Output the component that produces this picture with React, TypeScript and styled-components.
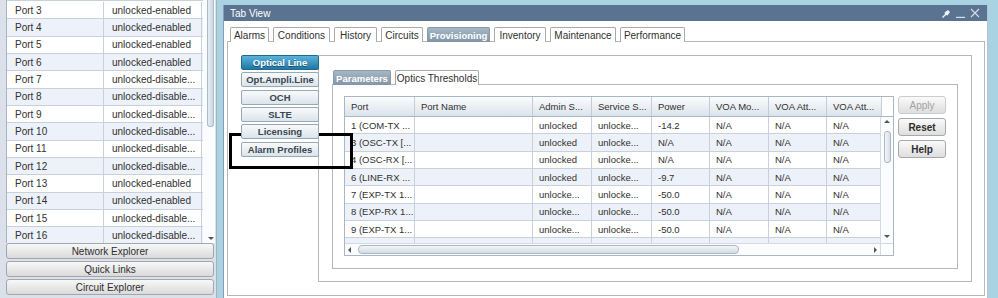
import * as React from 'react';
import styled, { createGlobalStyle, css } from 'styled-components';

const FONT = `"Liberation Sans", Arial, sans-serif`;
const ROW_H = 17.33;
const GRID = '#c8d1db';
const TINT = '#edf2fa';
const PANEL_BORDER = '#b4b8bc';

const GlobalStyle = createGlobalStyle`
  html, body { margin: 0; padding: 0; }
  body { font-family: ${FONT}; background: #a9d3e3; }
  * { box-sizing: border-box; }
`;

const Screen = styled.div`
  position: relative;
  width: 998px;
  height: 298px;
  display: flex;
  overflow: hidden;
  background: #a9d3e3;
  font-family: ${FONT};
  font-size: 10px;
  color: #303030;
`;

/* ---------- left panel ---------- */

const LeftPanel = styled.div`
  width: 217px;
  flex: none;
  display: flex;
  flex-direction: column;
  padding: 0 1px 0 6px;
  background: #dbe1ea;
  border-right: 1px solid #a3b1be;
`;

const PortGrid = styled.div`
  height: 243px;
  display: flex;
  background: #fff;
  border-left: 1px solid #a9b4c0;
`;

const PortRows = styled.div`
  flex: 1;
  overflow: hidden;
  padding-top: 1px;
  border-top: 1px solid ${GRID};
`;

const PortRow = styled.div<{ $tint: boolean }>`
  display: grid;
  grid-template-columns: 97px 98px;
  height: ${ROW_H}px;
  background: ${(p) => (p.$tint ? TINT : '#fff')};
  border-bottom: 1px solid ${GRID};
`;

const PortCell = styled.div`
  display: flex;
  align-items: center;
  padding-left: 8px;
  border-right: 1px solid ${GRID};
  white-space: nowrap;
  overflow: hidden;
`;

const SideScroll = styled.div`
  width: 12px;
  flex: none;
  display: flex;
  flex-direction: column;
  justify-content: space-between;
  align-items: flex-end;
  padding: 0 1px 3px 0;
  background: #fbfcfd;
`;

const SideThumb = styled.div`
  width: 7px;
  height: 127px;
  border: 1px solid #a8bccb;
  border-top: none;
  border-radius: 0 0 3px 3px;
  background: linear-gradient(90deg, #e6eef4, #c9d8e3);
`;

const Arrow = styled.span<{ $dir: 'up' | 'down' | 'left' | 'right' }>`
  width: 0;
  height: 0;
  display: block;
  flex: none;
  ${(p) =>
    p.$dir === 'down'
      ? css`border-left: 3px solid transparent; border-right: 3px solid transparent; border-top: 3px solid #555;`
      : p.$dir === 'up'
      ? css`border-left: 3px solid transparent; border-right: 3px solid transparent; border-bottom: 3px solid #555;`
      : p.$dir === 'left'
      ? css`border-top: 3px solid transparent; border-bottom: 3px solid transparent; border-right: 3px solid #555;`
      : css`border-top: 3px solid transparent; border-bottom: 3px solid transparent; border-left: 3px solid #555;`}
`;

const ExplorerStack = styled.div`
  display: flex;
  flex-direction: column;
  gap: 2px;
  padding-right: 1px;
`;

const ExplorerButton = styled.div`
  height: 16px;
  display: flex;
  align-items: center;
  justify-content: center;
  border: 1px solid #a2a7ac;
  border-radius: 3px;
  background: linear-gradient(#f8f8f8, #dadada);
  color: #2e2e2e;
`;

/* ---------- window ---------- */

const Window = styled.div`
  width: 765px;
  flex: none;
  margin: 5px 0 0 6px;
  display: flex;
  flex-direction: column;
  border-left: 1px solid #8a9cad;
  border-right: 1px solid #b6c4cf;
`;

const TitleBar = styled.div`
  height: 16px;
  flex: none;
  display: flex;
  align-items: center;
  justify-content: space-between;
  padding: 0 7px 0 6px;
  background: #5a7390;
  color: #fff;
`;

const TitleIcons = styled.div`
  display: flex;
  align-items: center;
  gap: 4px;
`;

const WindowBody = styled.div`
  flex: 1;
  display: flex;
  flex-direction: column;
  padding: 5px 2px 2px 3px;
  background: #fff;
`;

const TabStrip = styled.div`
  display: flex;
  align-items: flex-end;
  gap: 4px;
  height: 16px;
  padding-left: 3px;
  margin-bottom: -1px;
  position: relative;
`;

const Tab = styled.div<{ $active?: boolean; $w: number }>`
  width: ${(p) => p.$w}px;
  height: 15px;
  display: flex;
  align-items: center;
  justify-content: center;
  border: 1px solid #a9a9a9;
  border-bottom: none;
  border-radius: 2px 2px 0 0;
  white-space: nowrap;
  ${(p) =>
    p.$active
      ? css`
          background: linear-gradient(#a5b6c4, #8295a7);
          color: #fff;
          font-weight: bold;
          font-size: 9.5px;
          border-color: #8a9aa8;
        `
      : css`
          background: #fff;
          color: #303030;
        `}
`;

const TabPanel = styled.div`
  flex: 1;
  display: flex;
  border: 1px solid ${PANEL_BORDER};
  padding: 13px 12px 13px 13px;
`;

const SideNav = styled.div`
  width: 78px;
  flex: none;
  display: flex;
  flex-direction: column;
  gap: 2.33px;
  margin-right: -1px;
  position: relative;
  z-index: 1;
`;

const SideButton = styled.div<{ $active?: boolean }>`
  height: 15px;
  display: flex;
  align-items: center;
  justify-content: center;
  border: 1px solid #98a8b6;
  border-radius: 2px;
  font-weight: bold;
  font-size: 9.5px;
  white-space: nowrap;
  ${(p) =>
    p.$active
      ? css`
          background: linear-gradient(#5bb3da, #1f77a4);
          border-color: #206a8e;
          color: #fff;
          text-shadow: 0 1px 0 #174f6c;
        `
      : css`
          background: linear-gradient(#f8fafc, #dbe4eb);
          color: #3a4650;
        `}
`;

const InnerPanel = styled.div`
  flex: 1;
  display: flex;
  flex-direction: column;
  border: 1px solid ${PANEL_BORDER};
  padding: 14px 13px 12px 13px;
`;

const SubTabs = styled(TabStrip)`
  padding-left: 1px;
  height: 15px;
`;

const ParamsPanel = styled.div`
  flex: 1;
  display: flex;
  gap: 4px;
  border: 1px solid ${PANEL_BORDER};
  padding: 11px 10px 10px 11px;
`;

const COLS = '70px 118px 59px 60px 58px 59px 58px 55px';

const DataTable = styled.div`
  width: 550px;
  height: 160px;
  flex: none;
  display: flex;
  flex-direction: column;
  border: 1px solid #a9b6c3;
  font-size: 9.5px;
`;

const HeaderRow = styled.div`
  height: 20px;
  flex: none;
  display: grid;
  grid-template-columns: ${COLS} 1fr;
  border-bottom: 1px solid #aab6c2;
`;

const HeaderCell = styled.div<{ $blank?: boolean }>`
  display: flex;
  align-items: center;
  padding-left: 6px;
  border-right: 1px solid ${(p) => (p.$blank ? 'transparent' : '#c2ccd6')};
  background: ${(p) => (p.$blank ? '#fff' : 'linear-gradient(#fbfcfd, #dbe3eb)')};
  white-space: nowrap;
`;

const TableBody = styled.div`
  flex: 1;
  display: flex;
  overflow: hidden;
`;

const DataRows = styled.div`
  flex: 1;
  overflow: hidden;
`;

const DataRow = styled.div<{ $tint: boolean }>`
  height: ${ROW_H}px;
  display: grid;
  grid-template-columns: ${COLS};
  background: ${(p) => (p.$tint ? TINT : '#fff')};
  border-bottom: 1px solid ${GRID};
`;

const DataCell = styled.div`
  display: flex;
  align-items: center;
  padding-left: 6px;
  border-right: 1px solid ${GRID};
  white-space: nowrap;
  overflow: hidden;
`;

const VScroll = styled.div`
  width: 13px;
  flex: none;
  display: flex;
  flex-direction: column;
  align-items: center;
  padding: 3px 0 5px;
  border-left: 1px solid #d3dae1;
  background: #fbfcfd;
`;

const VThumb = styled.div`
  width: 7px;
  height: 32px;
  margin-top: 8px;
  border: 1px solid #a9b8c4;
  border-radius: 3px;
  background: linear-gradient(90deg, #f3f6f8, #d6dfe6);
`;

const Spacer = styled.div`
  flex: 1;
`;

const HScroll = styled.div`
  height: 12px;
  flex: none;
  display: flex;
  align-items: center;
  border-top: 1px solid #d3dae1;
  background: #fbfcfd;
  padding-left: 3px;
`;

const HThumb = styled.div`
  width: 381px;
  height: 9px;
  margin-left: 7px;
  border: 1px solid #a9b8c4;
  border-radius: 4px;
  background: linear-gradient(#f3f6f8, #d3dce4);
`;

const Corner = styled.div`
  width: 13px;
  height: 100%;
  margin-left: 3px;
  border-left: 1px solid #d3dae1;
  background: #fff;
`;

const ActionStack = styled.div`
  display: flex;
  flex-direction: column;
  gap: 4px;
`;

const ActionButton = styled.div<{ $disabled?: boolean }>`
  width: 48px;
  height: 18px;
  display: flex;
  align-items: center;
  justify-content: center;
  border: 1px solid ${(p) => (p.$disabled ? '#c9cdd1' : '#a3a8ad')};
  border-radius: 3px;
  background: linear-gradient(#fafafa, #dedede);
  font-weight: ${(p) => (p.$disabled ? 'normal' : 'bold')};
  color: ${(p) => (p.$disabled ? '#a3a3a3' : '#2e2e2e')};
`;

const Highlight = styled.div`
  position: absolute;
  left: 229px;
  top: 133px;
  width: 124px;
  height: 36px;
  border: 3px solid #000;
  pointer-events: none;
`;

/* ---------- data ---------- */

const ports: [string, string][] = [
  ['Port 3', 'unlocked-enabled'],
  ['Port 4', 'unlocked-enabled'],
  ['Port 5', 'unlocked-enabled'],
  ['Port 6', 'unlocked-enabled'],
  ['Port 7', 'unlocked-disable...'],
  ['Port 8', 'unlocked-disable...'],
  ['Port 9', 'unlocked-disable...'],
  ['Port 10', 'unlocked-disable...'],
  ['Port 11', 'unlocked-disable...'],
  ['Port 12', 'unlocked-disable...'],
  ['Port 13', 'unlocked-enabled'],
  ['Port 14', 'unlocked-enabled'],
  ['Port 15', 'unlocked-disable...'],
  ['Port 16', 'unlocked-disable...'],
];

const tabs = [
  { label: 'Alarms', w: 39 },
  { label: 'Conditions', w: 57 },
  { label: 'History', w: 43 },
  { label: 'Circuits', w: 42 },
  { label: 'Provisioning', w: 63, active: true },
  { label: 'Inventory', w: 52 },
  { label: 'Maintenance', w: 66 },
  { label: 'Performance', w: 65 },
];

const sideItems = ['Optical Line', 'Opt.Ampli.Line', 'OCH', 'SLTE', 'Licensing', 'Alarm Profiles'];

const headers = ['Port', 'Port Name', 'Admin S...', 'Service S...', 'Power', 'VOA Mo...', 'VOA Att...', 'VOA Att...'];

const rows: string[][] = [
  ['1 (COM-TX ...', '', 'unlocked', 'unlocke...', '-14.2', 'N/A', 'N/A', 'N/A'],
  ['3 (OSC-TX [...', '', 'unlocked', 'unlocke...', 'N/A', 'N/A', 'N/A', 'N/A'],
  ['4 (OSC-RX [...', '', 'unlocked', 'unlocke...', 'N/A', 'N/A', 'N/A', 'N/A'],
  ['6 (LINE-RX ...', '', 'unlocked', 'unlocke...', '-9.7', 'N/A', 'N/A', 'N/A'],
  ['7 (EXP-TX 1...', '', 'unlocke...', 'unlocke...', '-50.0', 'N/A', 'N/A', 'N/A'],
  ['8 (EXP-RX 1...', '', 'unlocke...', 'unlocke...', '-50.0', 'N/A', 'N/A', 'N/A'],
  ['9 (EXP-TX 1...', '', 'unlocke...', 'unlocke...', '-50.0', 'N/A', 'N/A', 'N/A'],
  ['10 (EXP-RX ...', '', 'unlocke...', 'unlocke...', '-50.0', 'N/A', 'N/A', 'N/A'],
];

const TitleButtons = () => (
  <TitleIcons>
    <svg width="10" height="9" viewBox="0 0 10 9">
      <path d="M1 8 L4 5 L3.5 3.5 L7 1 L9 3 L6.5 6.5 L5 6 L2 9 Z" fill="#eef2f6" />
    </svg>
    <svg width="11" height="10" viewBox="0 0 11 10">
      <path d="M1 9.5 H10" stroke="#d6dee6" strokeWidth="1.4" />
    </svg>
    <svg width="10" height="10" viewBox="0 0 10 10">
      <path d="M1 1 L9 9 M9 1 L1 9" stroke="#d6dee6" strokeWidth="1.1" />
    </svg>
  </TitleIcons>
);

const App: React.FC = () => {
  return (
    <>
      <GlobalStyle />
      <Screen>
        <LeftPanel>
          <PortGrid>
            <PortRows>
              {ports.map(([name, state], i) => (
                <PortRow key={name} $tint={i % 2 === 1}>
                  <PortCell>{name}</PortCell>
                  <PortCell>{state}</PortCell>
                </PortRow>
              ))}
            </PortRows>
            <SideScroll>
              <SideThumb />
              <Arrow $dir="down" />
            </SideScroll>
          </PortGrid>
          <ExplorerStack>
            <ExplorerButton>Network Explorer</ExplorerButton>
            <ExplorerButton>Quick Links</ExplorerButton>
            <ExplorerButton>Circuit Explorer</ExplorerButton>
          </ExplorerStack>
        </LeftPanel>

        <Window>
          <TitleBar>
            <span>Tab View</span>
            <TitleButtons />
          </TitleBar>
          <WindowBody>
            <TabStrip>
              {tabs.map((t) => (
                <Tab key={t.label} $w={t.w} $active={t.active}>
                  {t.label}
                </Tab>
              ))}
            </TabStrip>
            <TabPanel>
              <SideNav>
                {sideItems.map((s, i) => (
                  <SideButton key={s} $active={i === 0}>
                    {s}
                  </SideButton>
                ))}
              </SideNav>
              <InnerPanel>
                <SubTabs>
                  <Tab $w={58} $active>
                    Parameters
                  </Tab>
                  <Tab $w={84}>Optics Thresholds</Tab>
                </SubTabs>
                <ParamsPanel>
                  <DataTable>
                    <HeaderRow>
                      {headers.map((h, i) => (
                        <HeaderCell key={i}>{h}</HeaderCell>
                      ))}
                      <HeaderCell $blank />
                    </HeaderRow>
                    <TableBody>
                      <DataRows>
                        {rows.map((r, i) => (
                          <DataRow key={i} $tint={i % 2 === 1}>
                            {r.map((c, j) => (
                              <DataCell key={j}>{c}</DataCell>
                            ))}
                          </DataRow>
                        ))}
                      </DataRows>
                      <VScroll>
                        <Arrow $dir="up" />
                        <VThumb />
                        <Spacer />
                        <Arrow $dir="down" />
                      </VScroll>
                    </TableBody>
                    <HScroll>
                      <Arrow $dir="left" />
                      <HThumb />
                      <Spacer />
                      <Arrow $dir="right" />
                      <Corner />
                    </HScroll>
                  </DataTable>
                  <ActionStack>
                    <ActionButton $disabled>Apply</ActionButton>
                    <ActionButton>Reset</ActionButton>
                    <ActionButton>Help</ActionButton>
                  </ActionStack>
                </ParamsPanel>
              </InnerPanel>
            </TabPanel>
          </WindowBody>
        </Window>
        <Highlight />
      </Screen>
    </>
  );
};

export default App;
